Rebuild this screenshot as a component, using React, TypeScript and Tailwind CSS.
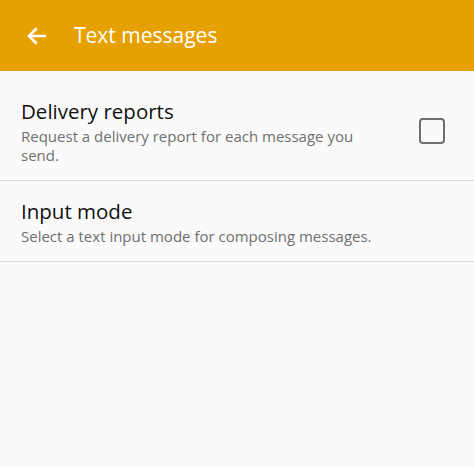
import React from 'react';

export default function App() {
  return (
    <div
      className="h-[467px] w-[474px] bg-[#fafafa]"
      style={{ fontFamily: '"Open Sans", "Liberation Sans", sans-serif' }}
    >
      <div className="flex h-[71px] items-center bg-[#e6a000] pl-[25px]">
        <svg width="24" height="24" viewBox="0 0 24 24" fill="none" stroke="#fff" strokeWidth="2.6" strokeLinecap="round" strokeLinejoin="round">
          <path d="M20 12H4" />
          <path d="M11 5l-7 7 7 7" />
        </svg>
        <span className="ml-[25px] text-[21px] text-white">Text messages</span>
      </div>
      <div className="pt-[26px]">
        <div className="flex items-center border-b border-[#dcdcdc] pb-[15px] pl-[21px] pr-[29px]">
          <div className="flex-1 pr-6">
            <div className="text-[20.5px] leading-[28px] text-[#111]">Delivery reports</div>
            <div className="mt-[2px] max-w-[362px] text-[15px] leading-[19px] text-[#6f6f6f]">
              Request a delivery report for each message you send.
            </div>
          </div>
          <div className="h-[26px] w-[26px] shrink-0 rounded-[4px] border-[2.5px] border-[#6e6e6e]" />
        </div>
        <div className="border-b border-[#dcdcdc] pb-[15px] pl-[21px] pt-[16px]">
          <div className="text-[20.5px] leading-[28px] text-[#111]">Input mode</div>
          <div className="mt-[2px] text-[15px] leading-[19px] text-[#6f6f6f]">
            Select a text input mode for composing messages.
          </div>
        </div>
      </div>
    </div>
  );
}
